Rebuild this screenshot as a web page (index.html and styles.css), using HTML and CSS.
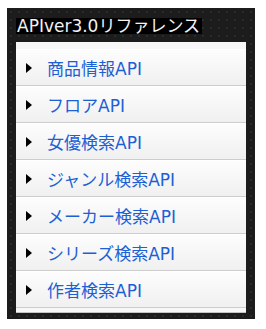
FILE: index.html
```html
<!DOCTYPE html>
<html>
	<head>
		<meta charset="utf-8">
		<title>APIver3.0リファレンス</title>
		<link rel="stylesheet" href="styles.css">
	</head>
	<body>
		<div class="side-box">
			<div class="side-title"><span>APIver3.0リファレンス</span></div>
			<ul class="api-list">
				<li><a href="javascript:;">商品情報API</a></li>
				<li><a href="javascript:;">フロアAPI</a></li>
				<li><a href="javascript:;">女優検索API</a></li>
				<li><a href="javascript:;">ジャンル検索API</a></li>
				<li><a href="javascript:;">メーカー検索API</a></li>
				<li><a href="javascript:;">シリーズ検索API</a></li>
				<li><a href="javascript:;">作者検索API</a></li>
			</ul>
		</div>
	</body>
</html>
```

FILE: styles.css
```css
body {
	margin: 0;
	background-color: #fff;
	font-family: "DejaVu Sans", "Noto Sans CJK JP", sans-serif;
}
.side-box {
	width: 248px;
	height: 311px;
	margin: 8px 0 0 7px;
	padding: 10px 9px 0 9px;
	box-sizing: border-box;
	background-color: #1c1c1c;
	background-image: radial-gradient(#2a2a2a 1px, transparent 1px);
	background-size: 8px 8px;
}
.side-title {
	height: 16px;
	line-height: 16px;
	margin-bottom: 8px;
}
.side-title span {
	display: inline-block;
	height: 16px;
	padding: 0 2px 0 1px;
	background-color: #000;
	color: #f2f2f2;
	font-size: 17px;
}
.api-list {
	list-style: none;
	margin: 0;
	padding: 7px 0 4px 0;
	background-color: #f7f7f7;
	border-bottom: 1px solid #c4c4c4;
}
.api-list li {
	height: 35px;
	border-top: 1px solid #fff;
	border-bottom: 1px solid #cdcdcd;
	background: linear-gradient(#fdfdfd, #f0f0f0);
}
.api-list a {
	display: flex;
	align-items: center;
	height: 35px;
	padding-left: 10px;
	text-decoration: none;
	color: #1b60d4;
	font-size: 17px;
}
.api-list a::before {
	content: "";
	width: 0;
	height: 0;
	margin-right: 15px;
	border-top: 5px solid transparent;
	border-bottom: 5px solid transparent;
	border-left: 6px solid #000;
}
```
